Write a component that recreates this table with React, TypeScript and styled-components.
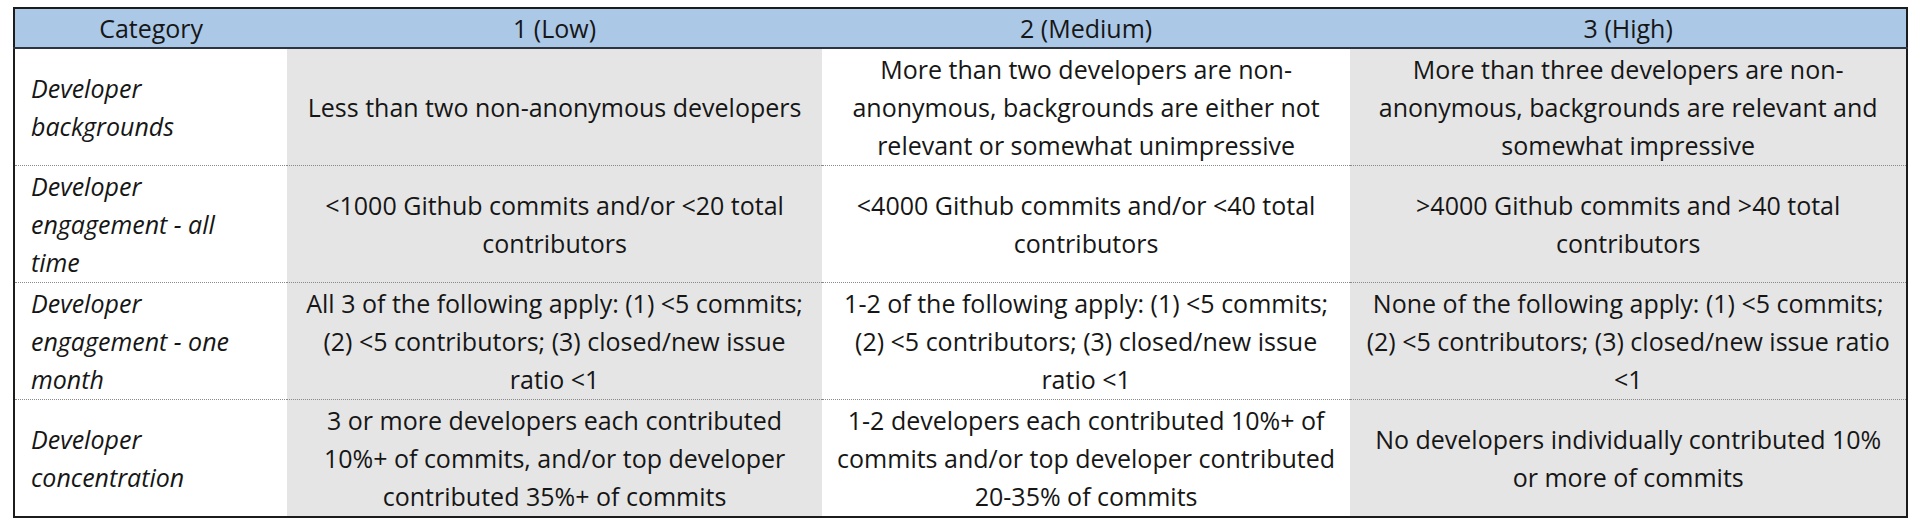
import React from 'react';
import styled, { createGlobalStyle } from 'styled-components';

const GlobalStyle = createGlobalStyle`
  html, body {
    margin: 0;
    padding: 0;
    background: #ffffff;
  }
  body {
    font-family: 'Open Sans', 'Noto Sans', sans-serif;
    color: #161616;
  }
`;

interface Row {
  category: string;
  low: string;
  medium: string;
  high: string;
}

const rows: Row[] = [
  {
    category: 'Developer backgrounds',
    low: 'Less than two non-anonymous developers',
    medium:
      'More than two developers are non-anonymous, backgrounds are either not relevant or somewhat unimpressive',
    high: 'More than three developers are non-anonymous, backgrounds are relevant and somewhat impressive',
  },
  {
    category: 'Developer engagement - all time',
    low: '<1000 Github commits and/or <20 total contributors',
    medium: '<4000 Github commits and/or <40 total contributors',
    high: '>4000 Github commits and >40 total contributors',
  },
  {
    category: 'Developer engagement - one month',
    low: 'All 3 of the following apply: (1) <5 commits; (2) <5 contributors; (3) closed/new issue ratio <1',
    medium:
      '1-2 of the following apply: (1) <5 commits; (2) <5 contributors; (3) closed/new issue ratio <1',
    high: 'None of the following apply: (1) <5 commits; (2) <5 contributors; (3) closed/new issue ratio <1',
  },
  {
    category: 'Developer concentration',
    low: '3 or more developers each contributed 10%+ of commits, and/or top developer contributed 35%+ of commits',
    medium:
      '1-2 developers each contributed 10%+ of commits and/or top developer contributed 20-35% of commits',
    high: 'No developers individually contributed 10% or more of commits',
  },
];

const Page = styled.div`
  padding: 7px 12px 8px 13px;
`;

const Table = styled.table`
  width: 1895px;
  table-layout: fixed;
  border-collapse: collapse;
  border: 2px solid #1c1c1c;
  font-size: 25px;
  line-height: 38px;
`;

const HeadCell = styled.th`
  height: 37px;
  padding: 0 4px;
  background: #abc8e7;
  border-bottom: 2px solid #2c3440;
  font-weight: 400;
  text-align: center;
  vertical-align: middle;
`;

const BodyRow = styled.tr`
  & + & td {
    border-top: 1px dotted #8a8a8a;
  }
`;

const CategoryCell = styled.td`
  height: 116px;
  padding: 0 34px 0 16px;
  font-style: italic;
  text-align: left;
  vertical-align: middle;
  background: #ffffff;
`;

const LevelCell = styled.td<{ $shaded?: boolean }>`
  height: 116px;
  padding: 0 12px;
  text-align: center;
  vertical-align: middle;
  background: ${(p) => (p.$shaded ? '#e5e5e5' : '#ffffff')};
`;

const App = () => (
  <Page>
    <GlobalStyle />
    <Table>
      <colgroup>
        <col style={{ width: 273 }} />
        <col style={{ width: 534 }} />
        <col style={{ width: 528 }} />
        <col style={{ width: 556 }} />
      </colgroup>
      <thead>
        <tr>
          <HeadCell>Category</HeadCell>
          <HeadCell>1 (Low)</HeadCell>
          <HeadCell>2 (Medium)</HeadCell>
          <HeadCell>3 (High)</HeadCell>
        </tr>
      </thead>
      <tbody>
        {rows.map((row) => (
          <BodyRow key={row.category}>
            <CategoryCell>{row.category}</CategoryCell>
            <LevelCell $shaded>{row.low}</LevelCell>
            <LevelCell>{row.medium}</LevelCell>
            <LevelCell $shaded>{row.high}</LevelCell>
          </BodyRow>
        ))}
      </tbody>
    </Table>
  </Page>
);

export default App;
